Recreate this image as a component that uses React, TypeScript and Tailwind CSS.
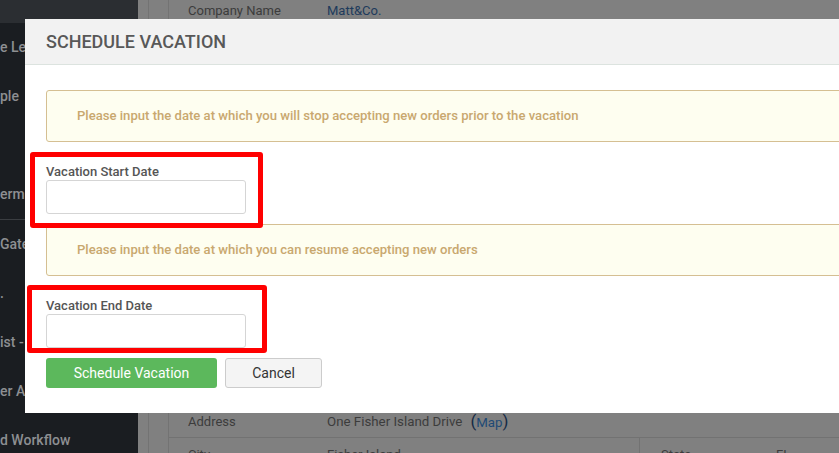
import React from "react";

const sideItems: { text: string; divider?: boolean }[] = [
  { text: "e Lending" },
  { text: "ple" },
  { text: "" },
  { text: "ermissions", divider: true },
  { text: "Gateway" },
  { text: "." },
  { text: "ist - Items" },
  { text: "er Assignment" },
  { text: "d Workflow" },
];

function Field({ label }: { label: string }) {
  return (
    <div className="flex flex-col">
      <label className="mt-[21px] text-[13px] leading-[17px] font-medium text-[#555]">{label}</label>
      <input
        type="text"
        className="h-[34px] w-[200px] rounded-[3px] border border-[#d5d5d5] bg-white px-2 text-[13px] outline-none"
      />
    </div>
  );
}

function Alert({ text }: { text: string }) {
  return (
    <div className="flex h-[52px] items-center rounded-[3px] border border-[#d5bf92] bg-[#fefef0] pl-[30px] text-[13.1px] font-medium text-[#c9a86f]">
      {text}
    </div>
  );
}

export default function App() {
  return (
    <div className="relative h-[453px] w-[839px] overflow-hidden font-['Roboto',sans-serif]">
      {/* Background page (dimmed) */}
      <div className="flex h-full">
        <aside className="flex w-[138px] shrink-0 flex-col bg-[#1a1d21]">
          <div className="h-[23px] shrink-0 bg-[#2b2e32]" />
          {sideItems.map((it, i) => (
            <div key={i} className={it.divider ? "border-b border-[#3a3d41]" : ""}>
              <div className="flex h-[49px] items-center whitespace-nowrap text-[14px] font-medium text-[#8d8f92]">
                {it.text}
              </div>
            </div>
          ))}
        </aside>
        <main className="flex flex-1 bg-[#808080]">
          <div className="w-[11px] shrink-0 border-r border-[#737373]" />
          <div className="w-[20px] shrink-0 border-r border-[#737373]" />
          <div className="flex flex-1 flex-col text-[13px] text-[#3c3c3c]">
            <div className="flex h-[21px] items-center">
              <span className="w-[158px] shrink-0 pl-[19px]">Company Name</span>
              <span className="text-[#1e3b5c]">Matt&amp;Co.</span>
            </div>
            <div className="flex-1" />
            <div className="flex h-[31px] items-center border-b border-[#727272]">
              <span className="w-[158px] shrink-0 pl-[19px]">Address</span>
              <span className="text-[13.3px]">One Fisher Island Drive</span>
              <span className="ml-[8px] text-[13.3px] text-[#1e4a75]">
                <span className="text-[17px] text-[#142a45]">(</span>Map<span className="text-[17px] text-[#142a45]">)</span>
              </span>
            </div>
            <div className="flex h-[15px] items-start overflow-hidden">
              <span className="w-[158px] shrink-0 pl-[19px] pt-[7px] leading-[20px]">City</span>
              <span className="w-[313px] shrink-0 border-r border-[#727272] pt-[7px] leading-[20px]">Fisher Island</span>
              <span className="w-[136px] shrink-0 pl-[21px] pt-[7px] leading-[20px]">State</span>
              <span className="pt-[7px] leading-[20px]">FL</span>
            </div>
          </div>
        </main>
      </div>

      {/* Modal */}
      <div className="absolute left-[25px] top-[19px] w-[900px] bg-white">
        <div className="flex h-[46px] items-center border-b border-[#dce3df] bg-[#f2f2f2] px-[21px]">
          <h2 className="text-[18px] font-medium text-[#585858]">SCHEDULE VACATION</h2>
        </div>
        <div className="px-[21px] pb-[25px] pt-[25px]">
          <Alert text="Please input the date at which you will stop accepting new orders prior to the vacation" />
          <Field label="Vacation Start Date" />
          <div className="mt-[10px]">
            <Alert text="Please input the date at which you can resume accepting new orders" />
          </div>
          <Field label="Vacation End Date" />
          <div className="mt-[10px] flex gap-[8px]">
            <button className="h-[30px] w-[171px] rounded-[3px] bg-[#5cb85c] text-[14px] text-white">
              Schedule Vacation
            </button>
            <button className="h-[30px] w-[97px] rounded-[3px] border border-[#cccccc] bg-[#f4f4f4] text-[14px] text-[#333]">
              Cancel
            </button>
          </div>
        </div>
      </div>

      {/* Annotation boxes */}
      <div className="pointer-events-none absolute left-[30px] top-[152px] h-[76px] w-[233px] rounded-[3px] border-[5px] border-[#ff0000]" />
      <div className="pointer-events-none absolute left-[27px] top-[285px] h-[68px] w-[240px] rounded-[3px] border-[5px] border-[#ff0000]" />
    </div>
  );
}
